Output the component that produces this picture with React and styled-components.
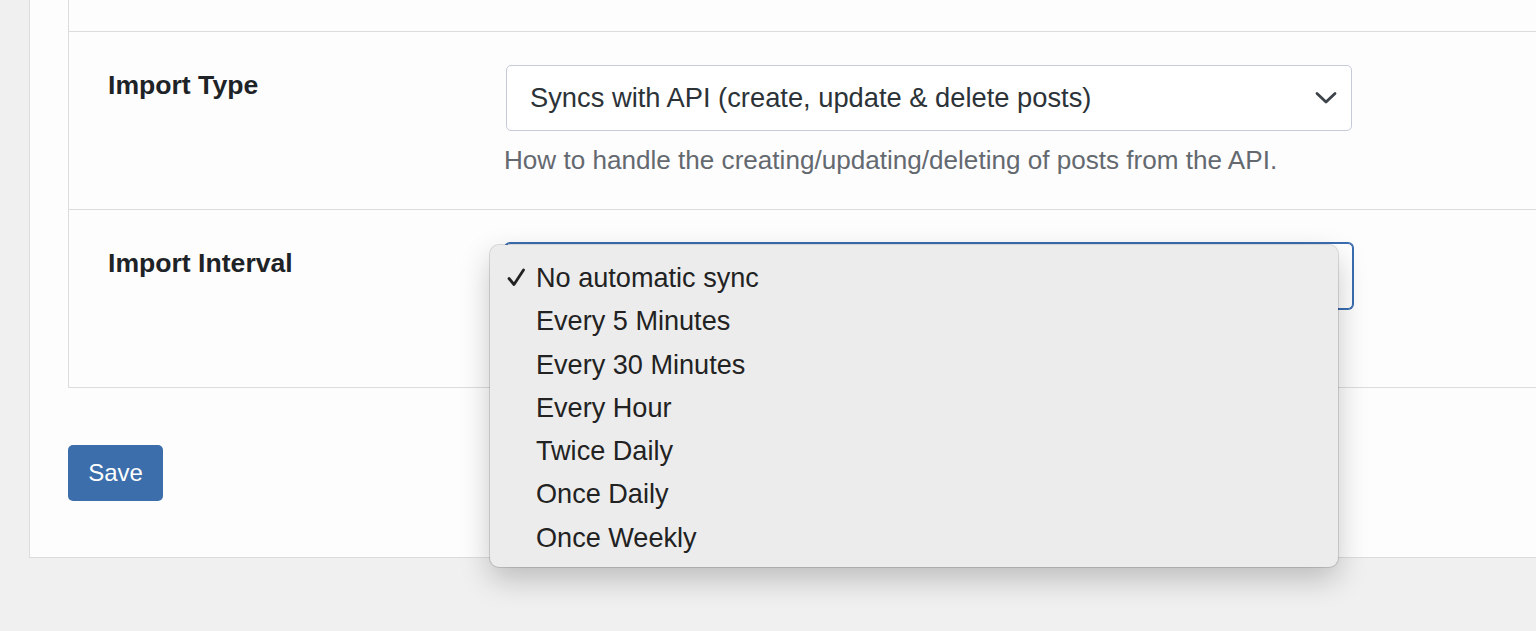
import React from "react";
import styled, { createGlobalStyle } from "styled-components";

const Global = createGlobalStyle`
  html, body { margin: 0; padding: 0; }
  body {
    background: #f0f0f1;
    font-family: "Liberation Sans", Arial, sans-serif;
    overflow: hidden;
    width: 1536px;
    height: 631px;
  }
`;

const Page = styled.div`
  padding-left: 29px;
`;

const Panel = styled.div`
  background: #fdfdfd;
  border: 1px solid #dcdcde;
  border-top: none;
  margin-right: -60px;
  padding: 0 0 56px 38px;
`;

const Table = styled.div`
  border-left: 1px solid #dcdcde;
  background: #fdfdfd;
`;

const TailRow = styled.div`
  height: 31px;
  border-bottom: 1px solid #dcdcde;
`;

const Row = styled.div`
  display: grid;
  grid-template-columns: 398px 850px;
  align-items: start;
  padding: 33px 0 32px 39px;
  border-bottom: 1px solid #dcdcde;
`;

const Label = styled.div`
  margin-top: 3px;
  font-size: 26.6px;
  line-height: 34px;
  font-weight: 700;
  color: #1d2327;
`;

const Field = styled.div`
  position: relative;
  min-height: 112px;
`;

const Select = styled.div`
  box-sizing: border-box;
  width: ${(p) => (p.$focused ? "848px" : "846px")};
  margin-left: ${(p) => (p.$focused ? "-1px" : "0")};
  height: 66px;
  display: flex;
  align-items: center;
  justify-content: space-between;
  padding: 0 14px 0 23px;
  background: #ffffff;
  border: 1px solid ${(p) => (p.$focused ? "#3a6db0" : "#c6cbd8")};
  box-shadow: ${(p) => (p.$focused ? "0 0 0 1px #3a6db0" : "none")};
  border-radius: 5px;
  font-size: 27.3px;
  color: #2c3338;
`;

const Help = styled.p`
  margin: 12px 0 0 -2px;
  font-size: 26.1px;
  line-height: 34px;
  color: #646970;
`;

const Chevron = () => (
  <svg width="22" height="14" viewBox="0 0 22 14" aria-hidden="true">
    <path d="M2 2.5 L11 11 L20 2.5" fill="none" stroke="#3c434a" strokeWidth="2.8" strokeLinecap="round" strokeLinejoin="round" />
  </svg>
);

const Menu = styled.ul`
  position: absolute;
  left: -16px;
  top: 2px;
  width: 848px;
  box-sizing: border-box;
  margin: 0;
  padding: 11px 0 8px;
  list-style: none;
  background: #ececec;
  border-radius: 9px;
  box-shadow: 0 0 0 1px rgba(0, 0, 0, 0.13), 0 12px 30px rgba(0, 0, 0, 0.22);
  z-index: 5;
`;

const Item = styled.li`
  position: relative;
  height: 43.3px;
  line-height: 43.3px;
  padding-left: 46px;
  font-size: 27.1px;
  color: #222222;
`;

const Check = styled.svg`
  position: absolute;
  left: 17px;
  top: 12px;
`;

const SaveButton = styled.button`
  display: block;
  margin-top: 57px;
  width: 95px;
  height: 56px;
  border: none;
  border-radius: 5px;
  background: #3b6eab;
  color: #ffffff;
  font-family: "Liberation Sans", Arial, sans-serif;
  font-size: 24px;
  padding: 0;
`;

const intervals = [
  "No automatic sync",
  "Every 5 Minutes",
  "Every 30 Minutes",
  "Every Hour",
  "Twice Daily",
  "Once Daily",
  "Once Weekly",
];

export default function App() {
  return (
    <>
      <Global />
      <Page>
        <Panel>
          <Table>
            <TailRow />
            <Row>
              <Label>Import Type</Label>
              <Field>
                <Select>
                  <span>Syncs with API (create, update &amp; delete posts)</span>
                  <Chevron />
                </Select>
                <Help>How to handle the creating/updating/deleting of posts from the API.</Help>
              </Field>
            </Row>
            <Row>
              <Label>Import Interval</Label>
              <Field>
                <Select $focused>
                  <span />
                  <Chevron />
                </Select>
                <Menu>
                  {intervals.map((label, i) => (
                    <Item key={label}>
                      {i === 0 && (
                        <Check width="19" height="19" viewBox="0 0 19 19" aria-hidden="true">
                          <path d="M2 10.5 L7 16.5 L16.5 2" fill="none" stroke="#222" strokeWidth="2.8" strokeLinecap="round" strokeLinejoin="round" />
                        </Check>
                      )}
                      {label}
                    </Item>
                  ))}
                </Menu>
              </Field>
            </Row>
          </Table>
          <SaveButton>Save</SaveButton>
        </Panel>
      </Page>
    </>
  );
}
